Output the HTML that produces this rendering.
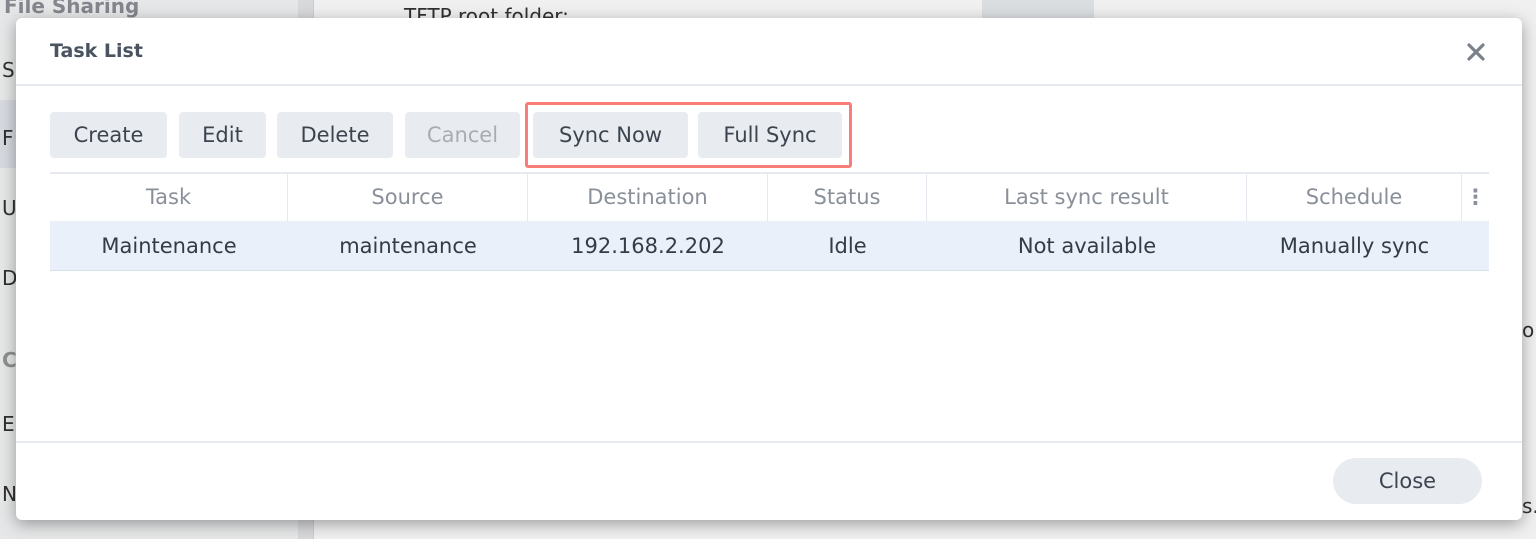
<!DOCTYPE html>
<html><head><style>
*{margin:0;padding:0;box-sizing:border-box}
body{width:1536px;height:539px;overflow:hidden;background:#fff;font-family:"DejaVu Sans",sans-serif;position:relative;color:#333b45}
.side{position:absolute;left:0;top:0;width:300px;height:539px;background:#f5f6f7}
.sb{position:absolute;left:298px;top:0;width:16px;height:539px;background:#e6e7e9;border-right:1px solid #d8dadd}
.bg{position:absolute;font-size:20px;color:#333}
.ov{position:absolute;left:0;top:0;width:1536px;height:539px;background:rgba(0,0,0,0.06)}
.dlg{position:absolute;left:16px;top:18px;width:1506px;height:502px;background:#fff;border-radius:6px;box-shadow:0 4px 16px rgba(0,0,0,0.35)}
.title{position:absolute;left:34px;top:22px;font-size:19px;font-weight:bold;color:#4a5360}
.x{position:absolute;left:1451px;top:25px}
.hl{position:absolute;left:0;width:1506px;height:2px;background:#e6eaf0}
.btn{position:absolute;top:94px;height:46px;background:#e8ecf0;border-radius:4px;font-size:21px;line-height:46px;text-align:center;color:#3d4450}
.red{position:absolute;left:509px;top:84px;width:327px;height:66px;border:3px solid #f97d78;border-radius:3px}
.th,.td{position:absolute;font-size:21px;text-align:center}
.th{top:156px;height:47px;line-height:47px;color:#8a9099;border-right:1px solid #e6eaf0}
.td{top:204px;height:48px;line-height:48px;color:#333b45}
</style></head><body>
<div class="side"></div><div class="sb"></div>
<div class="bg" style="left:4px;top:-6px;font-weight:bold;color:#8c9096">File Sharing</div>
<div class="bg" style="left:404px;top:4px">TFTP root folder:</div>
<div style="position:absolute;left:982px;top:0;width:112px;height:18px;background:#e8ecf0"></div>
<div class="bg" style="left:2px;top:58px">S</div>
<div style="position:absolute;left:0;top:100px;width:16px;height:68px;background:#e4e8ee"></div>
<div class="bg" style="left:2px;top:126px">F</div>
<div class="bg" style="left:2px;top:196px">U</div>
<div class="bg" style="left:2px;top:266px">D</div>
<div class="bg" style="left:2px;top:348px;color:#999;font-weight:bold">C</div>
<div class="bg" style="left:2px;top:412px">E</div>
<div class="bg" style="left:2px;top:482px">N</div>
<div class="bg" style="left:1522px;top:318px">o</div>
<div class="bg" style="left:1522px;top:494px">s.</div>
<div class="ov"></div>
<div class="dlg">
<div class="title">Task List</div>
<svg class="x" width="18" height="18" viewBox="0 0 18 18"><path d="M2 2L16 16M16 2L2 16" stroke="#7b8189" stroke-width="3.2" stroke-linecap="round"/></svg>
<div class="hl" style="top:66px"></div>
<div class="btn" style="left:34px;width:117px">Create</div>
<div class="btn" style="left:163px;width:87px">Edit</div>
<div class="btn" style="left:261px;width:116px">Delete</div>
<div class="btn" style="left:389px;width:115px;color:#a8adb3">Cancel</div>
<div class="btn" style="left:517px;width:155px">Sync Now</div>
<div class="btn" style="left:682px;width:144px">Full Sync</div>
<div class="red"></div>
<div style="position:absolute;left:34px;top:154px;width:1439px;height:2px;background:#e6eaf0"></div>
<div class="th" style="left:34px;width:238px">Task</div>
<div class="th" style="left:272px;width:240px">Source</div>
<div class="th" style="left:512px;width:240px">Destination</div>
<div class="th" style="left:752px;width:159px">Status</div>
<div class="th" style="left:911px;width:320px">Last sync result</div>
<div class="th" style="left:1231px;width:215px">Schedule</div>
<div class="th" style="left:1446px;width:27px;border:none;font-weight:bold">⋮</div>
<div style="position:absolute;left:34px;top:203px;width:1439px;height:50px;background:#e9f0fa;border-bottom:1px solid #d8e0ea"></div>
<div class="td" style="left:34px;width:238px">Maintenance</div>
<div class="td" style="left:272px;width:240px">maintenance</div>
<div class="td" style="left:512px;width:240px">192.168.2.202</div>
<div class="td" style="left:752px;width:159px">Idle</div>
<div class="td" style="left:911px;width:320px">Not available</div>
<div class="td" style="left:1231px;width:215px">Manually sync</div>
<div class="hl" style="top:423px"></div>
<div class="btn" style="left:1317px;top:440px;width:149px;height:46px;border-radius:23px">Close</div>
</div>
</body></html>
